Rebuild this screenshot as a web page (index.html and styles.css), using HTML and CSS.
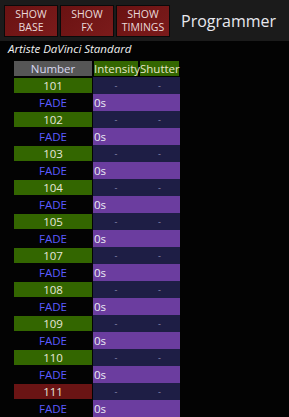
FILE: index.html
```html
<!DOCTYPE html>
<html lang="en">
<head>
    <meta charset="UTF-8">
    <meta name="viewport" content="width=device-width, initial-scale=1.0">
    <title>Programmer</title>
    <link rel="stylesheet" href="styles.css">
</head>
<body>
    <div class="topbar">
        <button class="btn"><span>SHOW</span><span>BASE</span></button>
        <button class="btn"><span>SHOW</span><span>FX</span></button>
        <button class="btn"><span>SHOW</span><span>TIMINGS</span></button>
        <div class="title">Programmer</div>
    </div>
    <div class="fixture">Artiste DaVinci Standard</div>
    <div class="grid" id="grid">
        <div class="row">
            <div class="num head">Number</div>
            <div class="col-head int">Intensity</div>
            <div class="col-head shut">Shutter</div>
        </div>
    </div>

    <script>
        const channels = [
            { id: 101 }, { id: 102 }, { id: 103 }, { id: 104 }, { id: 105 },
            { id: 107 }, { id: 108 }, { id: 109 }, { id: 110 }, { id: 111, selected: true }
        ];
        const grid = document.getElementById('grid');

        channels.forEach(ch => {
            const row = document.createElement('div');
            row.className = 'row';
            row.innerHTML =
                '<div class="num' + (ch.selected ? ' selected' : '') + '">' + ch.id + '</div>' +
                '<div class="vals"><span class="int">-</span><span class="shut">-</span></div>';
            grid.appendChild(row);

            const fade = document.createElement('div');
            fade.className = 'row';
            fade.innerHTML = '<div class="num fade">FADE</div><div class="time">0s</div>';
            grid.appendChild(fade);
        });
    </script>
</body>
</html>
```

FILE: styles.css
```css
body {
    margin: 0;
    background: #030303;
    font-family: "Open Sans", "Noto Sans", sans-serif;
    color: #e4e4ee;
    overflow: hidden;
}
.topbar {
    display: flex;
    align-items: center;
    gap: 2px;
    height: 41px;
    padding: 0 4px;
    background: #1b1b1b;
}
.btn {
    display: flex;
    flex-direction: column;
    align-items: center;
    justify-content: center;
    width: 54px;
    height: 32px;
    padding: 0;
    background: linear-gradient(135deg, #6a1212 0%, #7b1b1b 100%);
    border: 1px solid #0a0a0a;
    color: #eadada;
    font-family: inherit;
    font-size: 10.5px;
    line-height: 13px;
}
.title {
    margin-left: 9px;
    font-size: 16px;
    color: #e8e8ee;
}
.fixture {
    height: 19px;
    padding-left: 8px;
    font-size: 11.5px;
    font-style: italic;
    line-height: 16px;
    color: #f0f0f0;
}
.grid {
    padding-left: 14px;
}
.row {
    display: flex;
    height: 17px;
    font-size: 11.5px;
    line-height: 15px;
}
.num {
    width: 78px;
    margin: 1px 1px 1px 0;
    text-align: center;
    background: #336600;
    color: #e6e6d8;
}
.num.head {
    background: #565656;
    color: #d8d8f0;
}
.num.selected {
    background: #6a1414;
}
.num.fade {
    background: none;
    color: #5b5bff;
}
.col-head {
    margin: 1px;
    background: #336600;
    color: #e6e6c8;
    text-align: center;
}
.col-head.int {
    width: 44px;
}
.col-head.shut {
    width: 39px;
}
.vals {
    display: flex;
    width: 87px;
    background: #1e1e45;
    color: #8a8ab0;
    font-size: 9px;
    line-height: 17px;
}
.vals .int {
    width: 46px;
    text-align: center;
}
.vals .shut {
    width: 41px;
    text-align: center;
}
.time {
    width: 86px;
    padding-left: 1px;
    background: #6b3d9f;
    color: #ececf4;
    line-height: 17px;
}
```
